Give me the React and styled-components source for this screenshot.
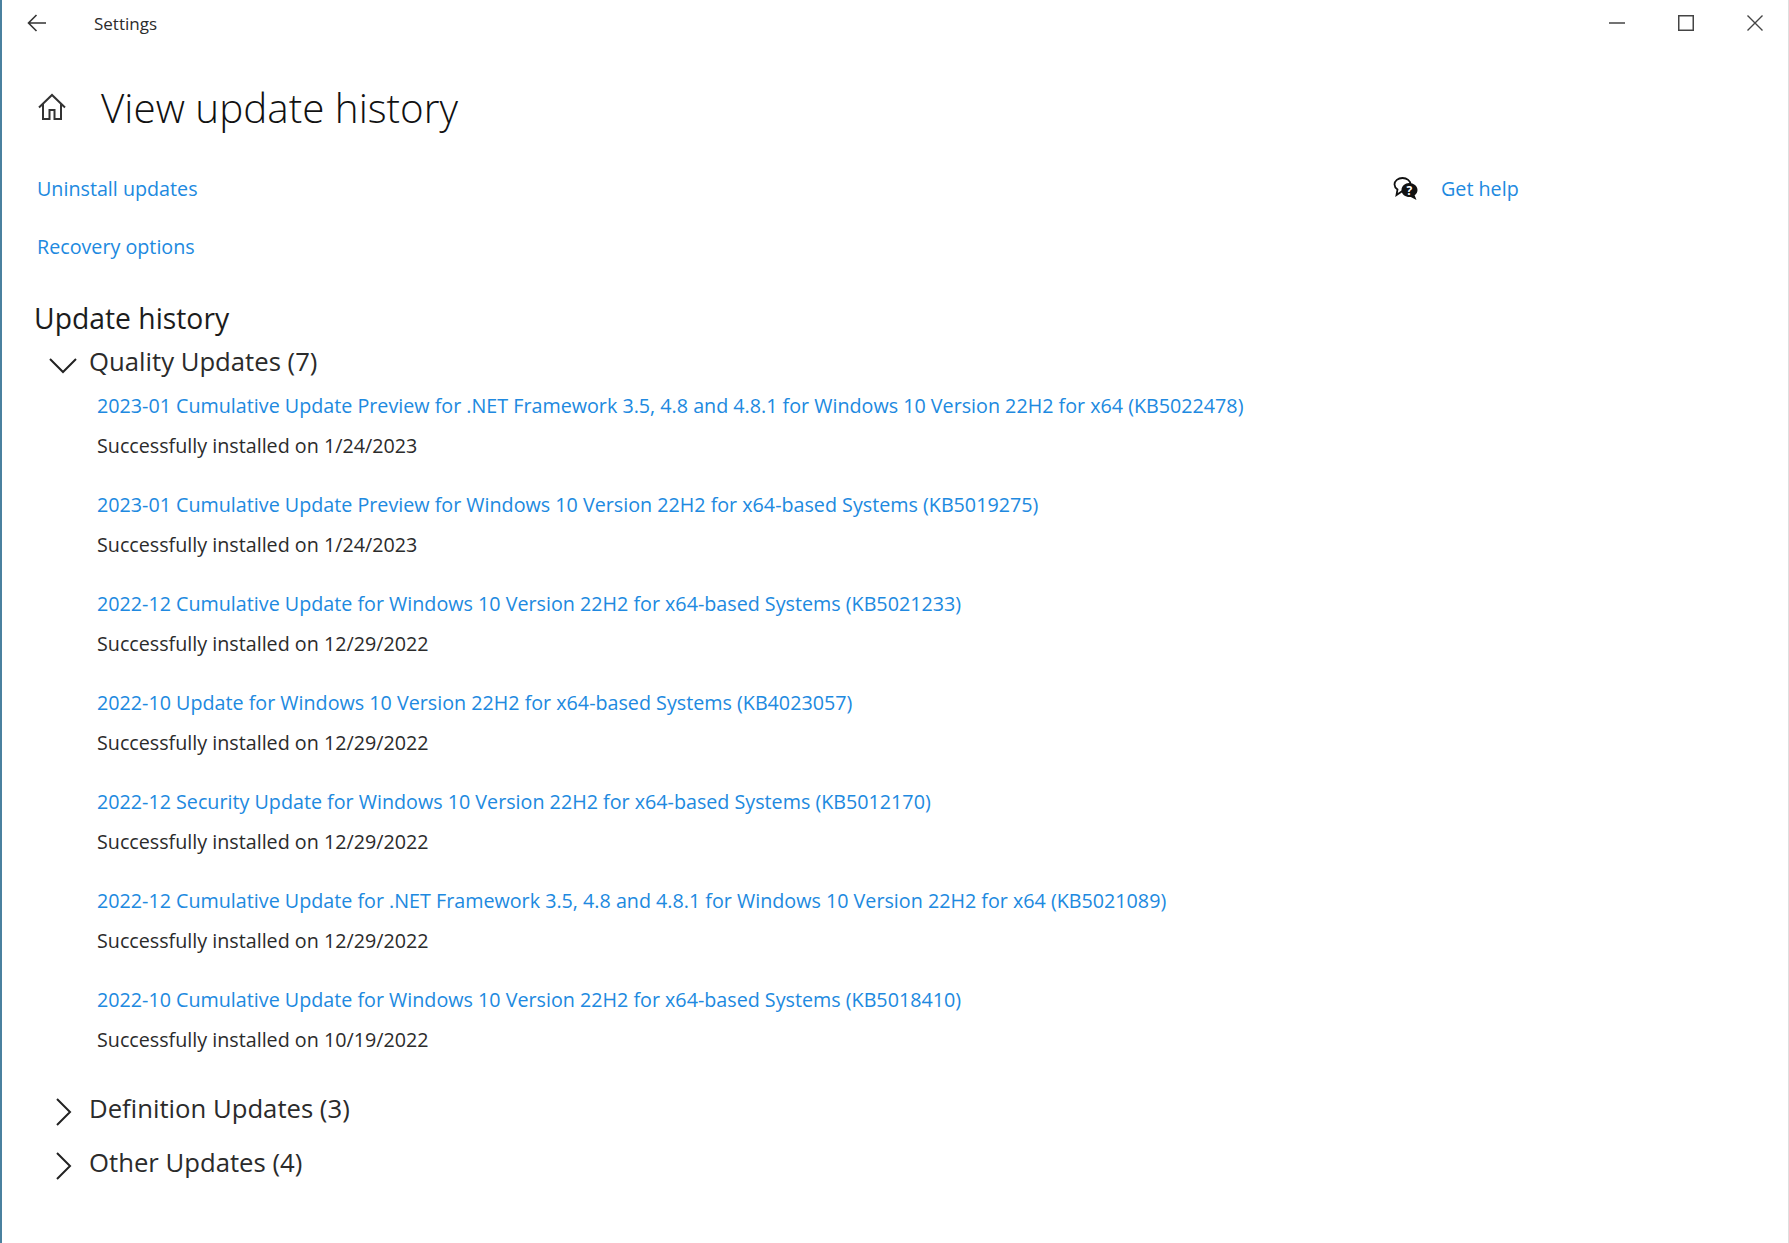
import React from 'react';
import styled, { createGlobalStyle } from 'styled-components';

const GlobalStyle = createGlobalStyle`
  html, body { margin: 0; padding: 0; background: #fff; }
  body { font-family: 'Open Sans', 'Noto Sans', sans-serif; color: #1a1a1a; }
`;

const BLUE = '#2089e0';

const Window = styled.div`
  min-height: 100vh;
  box-sizing: border-box;
  border-left: 2px solid #4a819f;
  border-right: 1px solid #dedede;
  display: flex;
  flex-direction: column;
`;

const TitleBar = styled.header`
  height: 46px;
  margin-right: -1px;
  display: flex;
  align-items: center;
`;

const BackButton = styled.button`
  width: 72px;
  height: 46px;
  padding: 0 2px 0 0;
  border: 0;
  background: none;
  display: flex;
  align-items: center;
  justify-content: center;
`;

const AppName = styled.span`
  margin-left: 20px;
  font-size: 17px;
  color: #2b2b2b;
  flex: 1;
`;

const WindowButton = styled.button`
  width: 68.67px;
  height: 46px;
  padding: 0;
  border: 0;
  background: none;
  display: flex;
  align-items: center;
  justify-content: center;
`;

const Content = styled.main`
  padding: 0 0 0 35px;
  display: flex;
  flex-direction: column;
`;

const PageHeader = styled.div`
  height: 122px;
  margin-bottom: 6.6px;
  display: flex;
  align-items: center;
`;

const HomeIcon = styled.svg`
  width: 30px;
  height: 30px;
`;

const PageTitle = styled.h1`
  margin: 0 0 0 34px;
  font-size: 40.4px;
  font-weight: 300;
  color: #111;
`;

const LinkArea = styled.div`
  display: grid;
  grid-template-columns: 1355px auto;
`;

const LinkColumn = styled.div`
  display: flex;
  flex-direction: column;
  gap: 30px;
`;

const Link = styled.a`
  font-size: 19.72px;
  line-height: 28px;
  color: ${BLUE};
  text-decoration: none;
`;

const HelpLink = styled.div`
  display: flex;
  align-items: center;
  gap: 21px;
  height: 28px;
`;

const SectionTitle = styled.h2`
  margin: 37.4px 0 5.5px -3px;
  font-size: 28.3px;
  line-height: 40px;
  font-weight: 400;
  color: #1c1c1c;
`;

const GroupRow = styled.div`
  display: flex;
  align-items: center;
  height: 36px;
`;

const GroupIcon = styled.span`
  width: 52px;
  display: flex;
  justify-content: center;
  padding-top: 7px;
`;

const GroupName = styled.span`
  font-size: 25.7px;
  color: #2b2b2b;
`;

const UpdateList = styled.ul`
  list-style: none;
  margin: 12.8px 0 0;
  padding: 0 0 0 60px;
`;

const UpdateItem = styled.li`
  height: 98.9px;
  display: flex;
  flex-direction: column;
  gap: 12px;
`;

const Status = styled.span`
  font-size: 19.72px;
  line-height: 28px;
  color: #2b2b2b;
`;

const Groups = styled.div`
  display: flex;
  flex-direction: column;
  gap: 18px;
  margin-top: 6.4px;
`;

const updates = [
  ['2023-01 Cumulative Update Preview for .NET Framework 3.5, 4.8 and 4.8.1 for Windows 10 Version 22H2 for x64 (KB5022478)', '1/24/2023'],
  ['2023-01 Cumulative Update Preview for Windows 10 Version 22H2 for x64-based Systems (KB5019275)', '1/24/2023'],
  ['2022-12 Cumulative Update for Windows 10 Version 22H2 for x64-based Systems (KB5021233)', '12/29/2022'],
  ['2022-10 Update for Windows 10 Version 22H2 for x64-based Systems (KB4023057)', '12/29/2022'],
  ['2022-12 Security Update for Windows 10 Version 22H2 for x64-based Systems (KB5012170)', '12/29/2022'],
  ['2022-12 Cumulative Update for .NET Framework 3.5, 4.8 and 4.8.1 for Windows 10 Version 22H2 for x64 (KB5021089)', '12/29/2022'],
  ['2022-10 Cumulative Update for Windows 10 Version 22H2 for x64-based Systems (KB5018410)', '10/19/2022'],
];

const Chevron = ({ open }) => (
  <svg width="28" height="28" viewBox="0 0 28 28" fill="none" stroke="#222" strokeWidth="2">
    <path d={open ? 'M1 8l13 13L27 8' : 'M8 1l13 13L8 27'} />
  </svg>
);

export default function App() {
  return (
    <Window>
      <GlobalStyle />
      <TitleBar>
        <BackButton aria-label="Back">
          <svg width="20" height="18" viewBox="0 0 20 18" fill="none" stroke="#333" strokeWidth="1.6">
            <path d="M19 9H1.5M9.5 1l-8 8 8 8" />
          </svg>
        </BackButton>
        <AppName>Settings</AppName>
        <WindowButton aria-label="Minimize">
          <svg width="16" height="16" viewBox="0 0 16 16" stroke="#444" strokeWidth="1.5"><path d="M0 8h16" /></svg>
        </WindowButton>
        <WindowButton aria-label="Maximize">
          <svg width="16" height="16" viewBox="0 0 16 16" fill="none" stroke="#444" strokeWidth="1.5"><rect x=".75" y=".75" width="14.5" height="14.5" /></svg>
        </WindowButton>
        <WindowButton aria-label="Close">
          <svg width="16" height="16" viewBox="0 0 16 16" stroke="#444" strokeWidth="1.4"><path d="M.5.5l15 15M15.500 .5l-15 15" /></svg>
        </WindowButton>
      </TitleBar>
      <Content>
        <PageHeader>
          <HomeIcon viewBox="0 0 30 30" fill="none" stroke="#333" strokeWidth="2">
            <path d="M2 15.500L15 3l13 12.500M6 12v15h6.500v-9h5v9H24V12" />
          </HomeIcon>
          <PageTitle>View update history</PageTitle>
        </PageHeader>
        <LinkArea>
          <LinkColumn>
            <Link>Uninstall updates</Link>
            <Link>Recovery options</Link>
          </LinkColumn>
          <HelpLink>
            <svg width="28" height="26" viewBox="0 0 27 26">
              <path d="M10 2c4.500 0 8 2.800 8 6.500S14.500 15 10 15l-6 4 1-5.500C3 12 2 10.500 2 8.500 2 4.800 5.500 2 10 2z" fill="#fff" stroke="#111" strokeWidth="1.800" />
              <path d="M16.500 7c4.700 0 8.500 3 8.500 7 0 2.200-1.100 4-2.900 5.300L24 24l-5.700-3c-4.700.5-9.300-2-9.300-7 0-4 3.800-7 7.500-7z" fill="#111" />
              <text x="16.800" y="19" fontSize="12" fontWeight="700" fill="#fff" textAnchor="middle" fontFamily="Open Sans">?</text>
            </svg>
            <Link>Get help</Link>
          </HelpLink>
        </LinkArea>
        <SectionTitle>Update history</SectionTitle>
        <GroupRow>
          <GroupIcon><Chevron open /></GroupIcon>
          <GroupName>Quality Updates (7)</GroupName>
        </GroupRow>
        <UpdateList>
          {updates.map(([name, date]) => (
            <UpdateItem key={name}>
              <Link>{name}</Link>
              <Status>Successfully installed on {date}</Status>
            </UpdateItem>
          ))}
        </UpdateList>
        <Groups>
          <GroupRow>
            <GroupIcon><Chevron /></GroupIcon>
            <GroupName>Definition Updates (3)</GroupName>
          </GroupRow>
          <GroupRow>
            <GroupIcon><Chevron /></GroupIcon>
            <GroupName>Other Updates (4)</GroupName>
          </GroupRow>
        </Groups>
      </Content>
    </Window>
  );
}
